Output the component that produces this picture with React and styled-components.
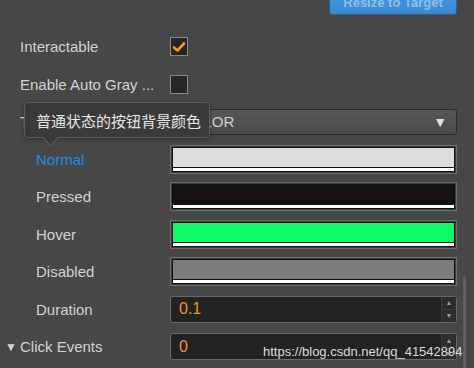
import React from "react";
import styled, { createGlobalStyle } from "styled-components";

const Global = createGlobalStyle`
  html, body {
    margin: 0;
    padding: 0;
    background: #474747;
    overflow: hidden;
  }
  body {
    font-family: "Liberation Sans", Arial, "Noto Sans CJK SC", sans-serif;
  }
`;

const Panel = styled.div`
  position: relative;
  width: 474px;
  height: 368px;
  background: #474747;
  padding: 0 17px 0 20px;
  box-sizing: border-box;
  overflow: hidden;
`;

const TopBar = styled.div`
  height: 28px;
  display: flex;
  justify-content: flex-end;
`;

const ResizeButton = styled.button`
  margin-top: -13px;
  width: 128px;
  height: 28px;
  border: 1px solid #2a5f92;
  border-radius: 3px;
  background: linear-gradient(#4a9ae0, #3b88d0);
  color: #8fc1ee;
  font-family: inherit;
  font-size: 13px;
  font-weight: bold;
  padding-top: 4px;
`;

const Row = styled.div`
  height: 37.5px;
  display: grid;
  grid-template-columns: 150px 1fr;
  align-items: center;
`;

const Label = styled.div`
  font-size: 15px;
  color: ${(p) => (p.$active ? "#1d8de0" : "#d2d2d2")};
  padding-left: ${(p) => (p.$indent ? "16px" : "0")};
  white-space: nowrap;
  display: flex;
  align-items: center;
`;

const Caret = styled.span`
  font-size: 12px;
  margin-left: -15px;
  width: 15px;
  color: #d2d2d2;
`;

const CheckBox = styled.div`
  width: 16px;
  height: 17px;
  border: 1px solid #8a8a8a;
  background: #262626;
  display: flex;
  align-items: center;
  justify-content: center;
`;

const Select = styled.div`
  height: 26px;
  box-sizing: border-box;
  border: 1px solid #2a2a2a;
  border-radius: 3px;
  background: linear-gradient(#575757, #4b4b4b);
  display: flex;
  align-items: center;
  justify-content: space-between;
  padding: 0 9px 0 10px;
  font-size: 15px;
  color: #d0d0d0;
`;

const Arrow = styled.span`
  font-size: 14px;
  color: #e0e0e0;
`;

const Swatch = styled.div`
  height: 29px;
  box-sizing: border-box;
  border: 1px solid #6e6e6e;
  padding: 1px;
  background: #3c3c3c;
`;

const SwatchInner = styled.div`
  height: 100%;
  box-sizing: border-box;
  border: 1px solid #111;
  display: flex;
  flex-direction: column;
`;

const SwatchColor = styled.div`
  flex: 1;
  background: ${(p) => p.$color};
  border-bottom: 1px solid #111;
`;

const SwatchAlpha = styled.div`
  height: 3px;
  background: #ffffff;
`;

const NumberBox = styled.div`
  height: 27px;
  box-sizing: border-box;
  border: 1px solid #6a6a6a;
  border-radius: 3px;
  background: #222;
  display: flex;
  align-items: stretch;
`;

const NumberValue = styled.div`
  flex: 1;
  display: flex;
  align-items: center;
  padding-left: 8px;
  font-size: 16px;
  color: #e8962e;
`;

const Spinner = styled.div`
  width: 14px;
  display: flex;
  flex-direction: column;
  border-left: 1px solid #3a3a3a;
  background: #2c2c2c;
`;

const SpinHalf = styled.div`
  flex: 1;
  display: flex;
  align-items: center;
  justify-content: center;
  font-size: 7px;
  color: #9a9a9a;
  & + & {
    border-top: 1px solid #3a3a3a;
  }
`;

const Tooltip = styled.div`
  position: absolute;
  left: 24px;
  top: 102px;
  width: 186px;
  height: 36px;
  box-sizing: border-box;
  background: #3a3a3a;
  border: 1px solid #5c5c5c;
  border-radius: 4px;
  box-shadow: 0 1px 4px rgba(0, 0, 0, 0.35);
  display: flex;
  align-items: center;
  padding-left: 11px;
  font-size: 15px;
  color: #e6e6e6;
  font-family: "Noto Sans CJK SC", sans-serif;

  &::after {
    content: "";
    position: absolute;
    left: 20px;
    bottom: -7px;
    width: 10px;
    height: 10px;
    background: #3a3a3a;
    border-right: 1px solid #5c5c5c;
    border-bottom: 1px solid #5c5c5c;
    transform: rotate(45deg);
  }
`;

const ScrollTrack = styled.div`
  position: absolute;
  right: 8px;
  top: 276px;
  width: 3px;
  height: 100px;
  background: #5e5e5e;
  border-radius: 2px;
`;

const Watermark = styled.div`
  position: absolute;
  left: 263px;
  top: 344px;
  font-size: 13px;
  color: rgba(240, 240, 240, 0.9);
  white-space: nowrap;
`;

const colors = [
  { name: "Normal", color: "#dcdcdc", active: true },
  { name: "Pressed", color: "#151111" },
  { name: "Hover", color: "#10fa6a" },
  { name: "Disabled", color: "#7c7c7c" },
];

function Check() {
  return (
    <svg width="14" height="12" viewBox="0 0 14 12">
      <path
        d="M2 6.5 L5.5 9.5 L12 2.5"
        fill="none"
        stroke="#f29a2e"
        strokeWidth="2.6"
        strokeLinecap="round"
        strokeLinejoin="round"
      />
    </svg>
  );
}

function NumberField({ value }) {
  return (
    <NumberBox>
      <NumberValue>{value}</NumberValue>
      <Spinner>
        <SpinHalf>▲</SpinHalf>
        <SpinHalf>▼</SpinHalf>
      </Spinner>
    </NumberBox>
  );
}

export default function App() {
  return (
    <>
      <Global />
      <Panel>
        <TopBar>
          <ResizeButton>Resize to Target</ResizeButton>
        </TopBar>
        <Row>
          <Label>Interactable</Label>
          <CheckBox>
            <Check />
          </CheckBox>
        </Row>
        <Row>
          <Label>Enable Auto Gray ...</Label>
          <CheckBox />
        </Row>
        <Row>
          <Label>Transition</Label>
          <Select>
            <span>COLOR</span>
            <Arrow>▼</Arrow>
          </Select>
        </Row>
        {colors.map((c) => (
          <Row key={c.name}>
            <Label $indent $active={c.active}>
              {c.name}
            </Label>
            <Swatch>
              <SwatchInner>
                <SwatchColor $color={c.color} />
                <SwatchAlpha />
              </SwatchInner>
            </Swatch>
          </Row>
        ))}
        <Row>
          <Label $indent>Duration</Label>
          <NumberField value="0.1" />
        </Row>
        <Row>
          <Label>
            <Caret>▼</Caret>Click Events
          </Label>
          <NumberField value="0" />
        </Row>
        <Tooltip>普通状态的按钮背景颜色</Tooltip>
        <ScrollTrack />
        <Watermark>https://blog.csdn.net/qq_41542894</Watermark>
      </Panel>
    </>
  );
}
